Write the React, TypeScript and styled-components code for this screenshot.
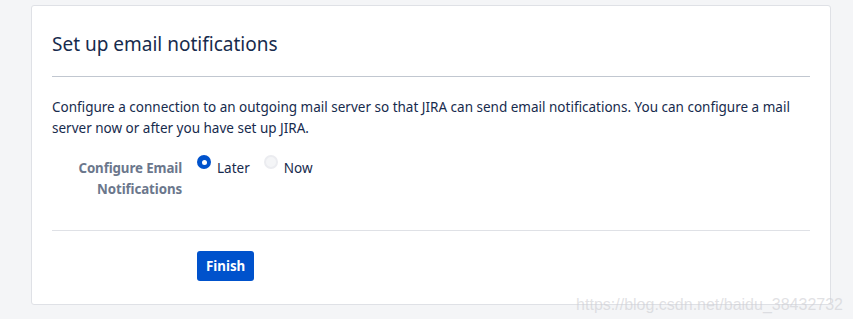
import { createGlobalStyle } from "styled-components"
import styled from "styled-components"

const Global = createGlobalStyle`
  body {
    margin: 0;
    background: #f4f5f7;
    font-family: "Noto Sans", "Liberation Sans", sans-serif;
    color: #172b4d;
  }
`

const Page = styled.div`
  position: relative;
  width: 853px;
  height: 319px;
  padding: 5px 22px 0 31px;
  box-sizing: border-box;
  overflow: hidden;
`

const Card = styled.div`
  background: #fff;
  border: 1px solid #dfe1e6;
  border-radius: 3px;
  padding: 0 20px;
  height: 300px;
  box-sizing: border-box;
`

const Header = styled.div`
  padding: 26px 0 20px;
  border-bottom: 1px solid #c1c7d0;

  h2 {
    margin: 0;
    font-size: 19px;
    font-weight: 400;
    line-height: 24px;
    color: #172b4d;
  }
`

const Intro = styled.p`
  margin: 20px 0 20px;
  font-size: 13.5px;
  line-height: 20.5px;
  color: #172b4d;
`

const FieldRow = styled.div`
  display: flex;
  align-items: flex-start;
  gap: 15px;
  padding-bottom: 31px;
  border-bottom: 1px solid #dfe1e6;
`

const Label = styled.div`
  width: 130px;
  text-align: right;
  font-size: 13.3px;
  font-weight: 700;
  line-height: 20.5px;
  color: #6b778c;
  letter-spacing: -0.1px;
`

const Options = styled.div`
  display: flex;
  gap: 14px;
  font-size: 13.5px;
  line-height: 20px;
`

const Option = styled.label`
  display: flex;
  align-items: flex-start;
  gap: 6px;
`

const Dot = styled.span<{ $on?: boolean }>`
  width: 14px;
  height: 14px;
  margin-top: -3px;
  border-radius: 50%;
  box-sizing: border-box;
  background: ${p => (p.$on ? "#0052cc" : "#f4f5f7")};
  border: ${p => (p.$on ? "none" : "2px solid #ebecf0")};
  display: flex;
  align-items: center;
  justify-content: center;

  &::after {
    content: "";
    width: 5px;
    height: 5px;
    border-radius: 50%;
    background: #fff;
    display: ${p => (p.$on ? "block" : "none")};
  }
`

const Actions = styled.div`
  padding: 20px 0 0 145px;
`

const Button = styled.button`
  background: #0052cc;
  color: #fff;
  border: none;
  border-radius: 3px;
  height: 30px;
  padding: 0 9px;
  font-family: inherit;
  font-size: 13.3px;
  font-weight: 700;
`

const Watermark = styled.div`
  position: absolute;
  right: 10px;
  bottom: 5px;
  font-family: "Liberation Sans", sans-serif;
  font-size: 16px;
  color: rgba(205, 205, 210, 0.6);
`

export default function App() {
  return (
    <Page>
      <Global />
      <Card>
        <Header>
          <h2>Set up email notifications</h2>
        </Header>
        <Intro>
          Configure a connection to an outgoing mail server so that JIRA can send email notifications. You can configure a mail
          server now or after you have set up JIRA.
        </Intro>
        <FieldRow>
          <Label>Configure Email Notifications</Label>
          <Options>
            <Option>
              <Dot $on />
              Later
            </Option>
            <Option>
              <Dot />
              Now
            </Option>
          </Options>
        </FieldRow>
        <Actions>
          <Button>Finish</Button>
        </Actions>
      </Card>
      <Watermark>https://blog.csdn.net/baidu_38432732</Watermark>
    </Page>
  )
}
